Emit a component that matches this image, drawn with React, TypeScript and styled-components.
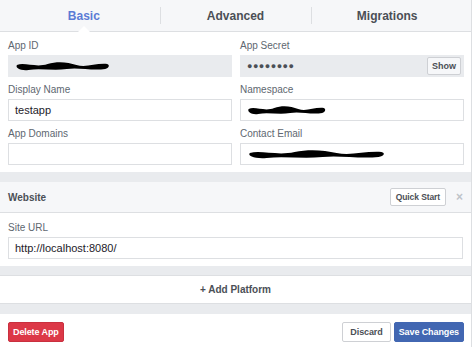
import { FC } from "react";
import styled, { createGlobalStyle } from "styled-components";

const GlobalStyle = createGlobalStyle`
  html, body {
    margin: 0;
    padding: 0;
    background: #ffffff;
    font-family: "Liberation Sans", Arial, Helvetica, sans-serif;
  }
`;

// Styled Components
const Panel = styled.div`
  width: 471px;
  border-right: 1px solid #dddfe2;
  background: #e9ebee;
`;

const Tabs = styled.div`
  display: flex;
  height: 31px;
  padding: 0 8px;
  background: #f6f7f9;
  border-bottom: 1px solid #dddfe2;
`;

const Tab = styled.div<{ $active?: boolean; $divider?: boolean }>`
  flex: 1;
  display: flex;
  align-items: center;
  justify-content: center;
  font-size: 12px;
  font-weight: bold;
  color: ${(p) => (p.$active ? "#5b7bd5" : "#4b4f56")};
  position: relative;

  &::before {
    content: "";
    display: ${(p) => (p.$divider ? "block" : "none")};
    position: absolute;
    left: 0;
    top: 7px;
    bottom: 7px;
    width: 1px;
    background: #dddfe2;
  }

  &::after {
    content: "";
    display: ${(p) => (p.$active ? "block" : "none")};
    position: absolute;
    left: 50%;
    bottom: -1px;
    margin-left: -6px;
    width: 0;
    height: 0;
    border-left: 6px solid transparent;
    border-right: 6px solid transparent;
    border-bottom: 6px solid #ffffff;
  }
`;

const Card = styled.div<{ $gap?: number }>`
  background: #ffffff;
  margin-bottom: ${(p) => p.$gap ?? 0}px;
`;

const FormGrid = styled.div`
  display: grid;
  grid-template-columns: 224px 224px;
  column-gap: 8px;
  row-gap: 5px;
  padding: 6px 8px 7px 8px;
`;

const Field = styled.div`
  display: flex;
  flex-direction: column;
`;

const Label = styled.div`
  font-size: 10px;
  line-height: 16px;
  color: #606770;
  margin-bottom: 1px;
`;

const Input = styled.div<{ $readonly?: boolean }>`
  height: 22px;
  box-sizing: border-box;
  display: flex;
  align-items: center;
  justify-content: space-between;
  padding: 0 2px 0 6px;
  font-size: 11px;
  color: #1d2129;
  background: ${(p) => (p.$readonly ? "#e9ebee" : "#ffffff")};
  border: 1px solid ${(p) => (p.$readonly ? "#e9ebee" : "#dddfe2")};
`;

const Dots = styled.span`
  font-size: 9px;
  letter-spacing: 0.5px;
  color: #4b4f56;
`;

const SmallButton = styled.div`
  height: 16px;
  padding: 0 4px;
  display: flex;
  align-items: center;
  font-size: 9px;
  font-weight: bold;
  color: #4b4f56;
  background: #f6f7f9;
  border: 1px solid #ced0d4;
  border-radius: 2px;
`;

const SectionHeader = styled.div`
  height: 30px;
  display: flex;
  align-items: center;
  padding: 0 8px;
  background: #f6f7f9;
  border-bottom: 1px solid #dddfe2;
  font-size: 10px;
  font-weight: bold;
  color: #4b4f56;
`;

const HeaderTitle = styled.div`
  flex: 1;
`;

const QuickStart = styled.div`
  height: 16px;
  padding: 0 5px;
  display: flex;
  align-items: center;
  font-size: 8.5px;
  font-weight: bold;
  letter-spacing: -0.1px;
  color: #4b4f56;
  background: #ffffff;
  border: 1px solid #ced0d4;
  border-radius: 2px;
`;

const Close = styled.div`
  width: 17px;
  text-align: right;
  color: #bec3c9;
  font-size: 12px;
`;

const SiteBody = styled.div`
  padding: 7px 8px 7px 8px;
`;

const AddPlatform = styled.div`
  height: 27px;
  display: flex;
  align-items: center;
  justify-content: center;
  background: #ffffff;
  border-top: 1px solid #dddfe2;
  border-bottom: 1px solid #dddfe2;
  font-size: 10px;
  font-weight: bold;
  color: #4b4f56;
  margin-bottom: 10px;
`;

const Footer = styled.div`
  display: flex;
  align-items: center;
  gap: 3px;
  height: 36px;
  padding: 0 7px 0 8px;
  background: #ffffff;
`;

const Spacer = styled.div`
  flex: 1;
`;

const Button = styled.div<{ $variant: "danger" | "primary" | "plain" }>`
  height: 18px;
  padding: 0 ${(p) => (p.$variant === "plain" ? 7 : p.$variant === "primary" ? 4 : 4)}px;
  display: flex;
  align-items: center;
  font-size: 9px;
  font-weight: bold;
  letter-spacing: -0.1px;
  border-radius: 2px;
  color: ${(p) => (p.$variant === "plain" ? "#4b4f56" : "#ffffff")};
  background: ${(p) =>
    p.$variant === "danger" ? "#dc3847" : p.$variant === "primary" ? "#4267b2" : "#ffffff"};
  border: 1px solid
    ${(p) =>
      p.$variant === "danger" ? "#c9303f" : p.$variant === "primary" ? "#4267b2" : "#ced0d4"};
`;

// redaction scribble
const Scribble: FC<{ width: number }> = ({ width }) => (
  <svg width={width} height="12" viewBox="0 0 100 12" preserveAspectRatio="none">
    <path
      d="M2 5 C10 2 22 8 34 4 C44 1 55 2 64 5 C74 8 84 3 96 4 C99 5 98 8 94 9 C80 11 66 7 54 9 C40 11 26 8 14 10 C6 11 0 8 2 5 Z"
      fill="#000"
    />
  </svg>
);

const App: FC = () => {
  return (
    <>
      <GlobalStyle />
      <Panel>
        <Tabs>
          <Tab $active>Basic</Tab>
          <Tab $divider>Advanced</Tab>
          <Tab $divider>Migrations</Tab>
        </Tabs>

        <Card $gap={10}>
          <FormGrid>
            <Field>
              <Label>App ID</Label>
              <Input $readonly>
                <Scribble width={96} />
              </Input>
            </Field>
            <Field>
              <Label>App Secret</Label>
              <Input $readonly>
                <Dots>●●●●●●●●</Dots>
                <SmallButton>Show</SmallButton>
              </Input>
            </Field>
            <Field>
              <Label>Display Name</Label>
              <Input>testapp</Input>
            </Field>
            <Field>
              <Label>Namespace</Label>
              <Input>
                <Scribble width={80} />
              </Input>
            </Field>
            <Field>
              <Label>App Domains</Label>
              <Input />
            </Field>
            <Field>
              <Label>Contact Email</Label>
              <Input>
                <Scribble width={140} />
              </Input>
            </Field>
          </FormGrid>
        </Card>

        <Card $gap={9}>
          <SectionHeader>
            <HeaderTitle>Website</HeaderTitle>
            <QuickStart>Quick Start</QuickStart>
            <Close>×</Close>
          </SectionHeader>
          <SiteBody>
            <Label>Site URL</Label>
            <Input>http://localhost:8080/</Input>
          </SiteBody>
        </Card>

        <AddPlatform>+ Add Platform</AddPlatform>

        <Footer>
          <Button $variant="danger">Delete App</Button>
          <Spacer />
          <Button $variant="plain">Discard</Button>
          <Button $variant="primary">Save Changes</Button>
        </Footer>
      </Panel>
    </>
  );
};

export default App;
